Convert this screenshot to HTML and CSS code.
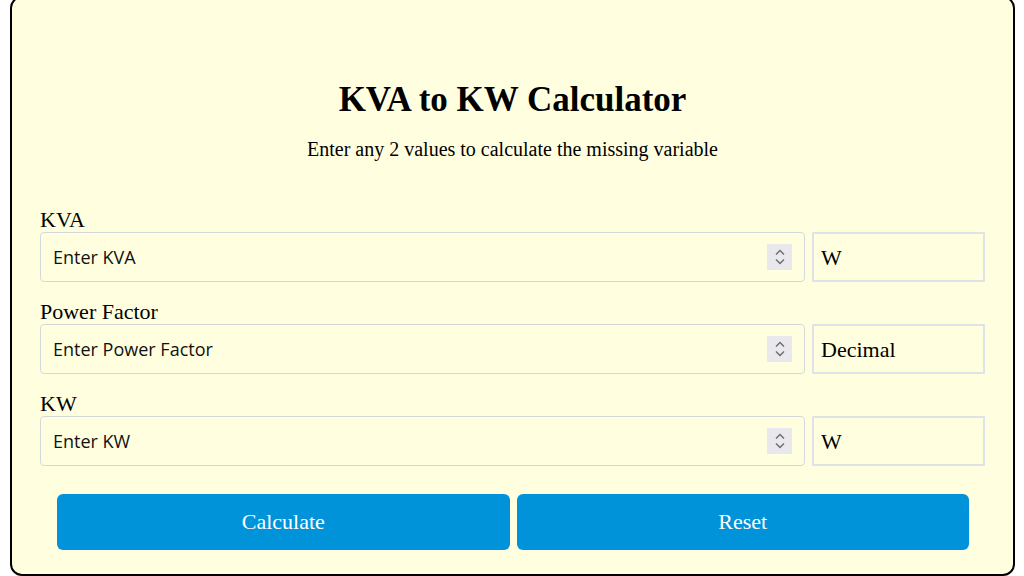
FILE: index.html
```html
<!doctype html>
<html lang="en">
<head>
  <meta charset="UTF-8" />
  <meta name="viewport" content="width=device-width, initial-scale=1.0" />
  <title>KVA to KW Calculator</title>
  <link rel="stylesheet" href="styles.css">
</head>
<body>
  <main class="calc-card">
    <h1 class="calc-title">KVA to KW Calculator</h1>
    <p class="calc-subtitle">Enter any 2 values to calculate the missing variable</p>

    <div class="field">
      <label class="field-label" for="kva">KVA</label>
      <div class="field-row">
        <div class="number-box">
          <input type="text" id="kva" class="number-input" placeholder="Enter KVA" />
          <span class="spinner">
            <svg width="14" height="20" viewBox="0 0 14 20"><path d="M3 7.5 7 3.5 11 7.5M3 12.5 7 16.5 11 12.5" fill="none" stroke="#6b6b6b" stroke-width="1.4"/></svg>
          </span>
        </div>
        <select class="unit-select"><option>W</option></select>
      </div>
    </div>

    <div class="field">
      <label class="field-label" for="pf">Power Factor</label>
      <div class="field-row">
        <div class="number-box">
          <input type="text" id="pf" class="number-input" placeholder="Enter Power Factor" />
          <span class="spinner">
            <svg width="14" height="20" viewBox="0 0 14 20"><path d="M3 7.5 7 3.5 11 7.5M3 12.5 7 16.5 11 12.5" fill="none" stroke="#6b6b6b" stroke-width="1.4"/></svg>
          </span>
        </div>
        <select class="unit-select"><option>Decimal</option></select>
      </div>
    </div>

    <div class="field">
      <label class="field-label" for="kw">KW</label>
      <div class="field-row">
        <div class="number-box">
          <input type="text" id="kw" class="number-input" placeholder="Enter KW" />
          <span class="spinner">
            <svg width="14" height="20" viewBox="0 0 14 20"><path d="M3 7.5 7 3.5 11 7.5M3 12.5 7 16.5 11 12.5" fill="none" stroke="#6b6b6b" stroke-width="1.4"/></svg>
          </span>
        </div>
        <select class="unit-select"><option>W</option></select>
      </div>
    </div>

    <div class="button-row">
      <button class="calc-button">Calculate</button>
      <button class="calc-button">Reset</button>
    </div>
  </main>
</body>
</html>
```

FILE: styles.css
```css
* {
  margin: 0;
  padding: 0;
  box-sizing: border-box;
}

html, body {
  background-color: #fff;
  font-family: "Liberation Serif", "Times New Roman", serif;
  color: #000;
  overflow: hidden;
}

.calc-card {
  margin: -4px 9px 0 10px;
  height: 580px;
  padding: 0 28px;
  background-color: #ffffe0;
  border: 2px solid #000;
  border-radius: 12px;
}

.calc-title {
  margin-top: 82px;
  text-align: center;
  font-size: 35px;
  font-weight: 700;
}

.calc-subtitle {
  margin-top: 18px;
  text-align: center;
  font-size: 20px;
}

.field {
  margin-bottom: 17px;
}

.field:first-of-type {
  margin-top: 46px;
}

.field-label {
  display: block;
  font-size: 22px;
  line-height: 25px;
}

.field-row {
  display: grid;
  grid-template-columns: 1fr 173px;
  gap: 7px;
}

.number-box {
  position: relative;
}

.number-input {
  width: 100%;
  height: 50px;
  padding: 0 50px 0 12px;
  border: 1px solid #d4d8db;
  border-radius: 4px;
  background: transparent;
  font-family: "Open Sans", "Noto Sans", sans-serif;
  font-size: 18px;
  color: #000;
  outline: none;
}

.number-input::placeholder {
  color: #111;
}

.spinner {
  position: absolute;
  top: 12px;
  right: 13px;
  width: 25px;
  height: 26px;
  background-color: #e9e9ed;
  display: flex;
  align-items: center;
  justify-content: center;
}

.unit-select {
  appearance: none;
  -webkit-appearance: none;
  height: 50px;
  padding: 0 7px;
  border: 2px solid #dde3e8;
  border-radius: 1px;
  background: transparent;
  font-family: "Liberation Serif", "Times New Roman", serif;
  font-size: 22px;
  color: #000;
}

.button-row {
  display: flex;
  gap: 7px;
  padding: 11px 16px 0 17px;
}

.calc-button {
  flex: 1;
  height: 56px;
  border: none;
  border-radius: 6px;
  background-color: #0093d9;
  color: #fff;
  font-family: "Liberation Serif", "Times New Roman", serif;
  font-size: 22px;
}
```
